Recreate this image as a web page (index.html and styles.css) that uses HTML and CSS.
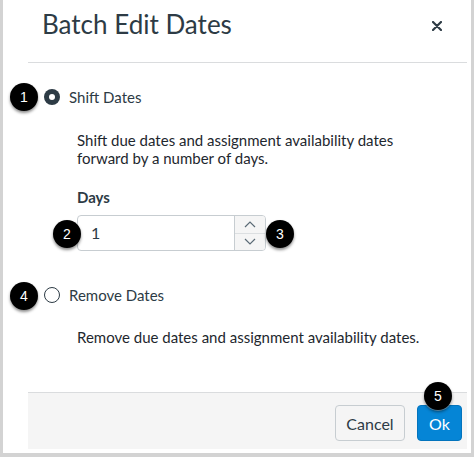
FILE: index.html
```html
<!DOCTYPE html>
<html>
<head>
<meta charset="utf-8">
<link rel="stylesheet" href="styles.css">
</head>
<body>
<div class="dialog">
  <div class="header">
    <h1 class="title">Batch Edit Dates</h1>
    <svg class="close" width="10" height="10" viewBox="0 0 10 10"><path d="M1 1 L9 9 M9 1 L1 9" stroke="#2d3b45" stroke-width="2.2" stroke-linecap="round"/></svg>
  </div>
  <div class="body">
    <div class="radio-row first">
      <span class="radio checked"></span>
      <span class="radio-label">Shift Dates</span>
    </div>
    <p class="desc shift-desc">Shift due dates and assignment availability dates<br>forward by a number of days.</p>
    <div class="field-label">Days</div>
    <div class="number-input">
      <span class="value">1</span>
      <div class="spinner">
        <div class="spin up"><svg width="12" height="7" viewBox="0 0 12 7"><path d="M1 6 L6 1 L11 6" fill="none" stroke="#5b6b76" stroke-width="1.2"/></svg></div>
        <div class="spin down"><svg width="12" height="7" viewBox="0 0 12 7"><path d="M1 1 L6 6 L11 1" fill="none" stroke="#5b6b76" stroke-width="1.2"/></svg></div>
      </div>
    </div>
    <div class="radio-row second">
      <span class="radio"></span>
      <span class="radio-label">Remove Dates</span>
    </div>
    <p class="desc remove-desc">Remove due dates and assignment availability dates.</p>
  </div>
  <div class="footer">
    <button class="btn cancel">Cancel</button>
    <button class="btn ok">Ok</button>
  </div>
</div>
<span class="badge b1">1</span>
<span class="badge b2">2</span>
<span class="badge b3">3</span>
<span class="badge b4">4</span>
<span class="badge b5">5</span>
</body>
</html>
```
FILE: styles.css
```css
html, body {
  margin: 0;
  padding: 0;
}
body {
  background: #d3d3d3;
  width: 474px;
  height: 457px;
  position: relative;
  overflow: hidden;
  font-family: Lato, "Open Sans", sans-serif;
  color: #2d3b45;
}
.dialog {
  margin-left: 3px;
  width: 468px;
  height: 453px;
  background: #fff;
  padding: 0 4px 4px 25px;
  box-sizing: border-box;
  display: flex;
  flex-direction: column;
}
.header {
  display: flex;
  justify-content: space-between;
  align-items: flex-start;
  height: 63px;
  box-sizing: border-box;
  padding: 8px 25px 0 14px;
  border-bottom: 1px solid #dadcde;
}
.title {
  margin: 0;
  font-size: 26px;
  line-height: 32px;
  font-weight: 400;
  color: #2d3b45;
}
.close {
  margin-top: 13px;
}
.body {
  display: flex;
  flex-direction: column;
  align-items: flex-start;
}
.radio-row {
  display: flex;
  align-items: center;
  height: 20px;
  padding-left: 16px;
}
.radio-row.first { margin-top: 24px; }
.radio-row.second { margin-top: 34px; }
.radio {
  width: 16px;
  height: 16px;
  border-radius: 50%;
  box-sizing: border-box;
  border: 1.5px solid #2d3b45;
  display: flex;
  align-items: center;
  justify-content: center;
}
.radio.checked {
  background: #2d3b45;
  border: none;
}
.radio.checked::after {
  content: "";
  width: 6px;
  height: 6px;
  border-radius: 50%;
  background: #fff;
}
.radio-label {
  margin-left: 9px;
  font-size: 15px;
  line-height: 20px;
}
.desc {
  margin: 0;
  padding-left: 49px;
  font-size: 15px;
  line-height: 18px;
  color: #1e272e;
}
.shift-desc { margin-top: 24px; }
.remove-desc { margin-top: 23px; }
.field-label {
  margin-top: 20px;
  padding-left: 49px;
  font-size: 15px;
  line-height: 20px;
  font-weight: 700;
}
.number-input {
  margin-top: 8px;
  margin-left: 49px;
  width: 189px;
  height: 36px;
  box-sizing: border-box;
  border: 1px solid #c7cdd1;
  border-radius: 4px;
  display: flex;
  align-items: stretch;
}
.value {
  flex: 1;
  padding-left: 13px;
  font-size: 16px;
  line-height: 34px;
}
.spinner {
  width: 30px;
  border-left: 1px solid #c7cdd1;
  background: #f5f5f5;
  border-radius: 0 3px 3px 0;
  display: flex;
  flex-direction: column;
}
.spin {
  flex: 1;
  display: flex;
  align-items: center;
  justify-content: center;
}
.spin.up { border-bottom: 1px solid #dcdfe1; }
.footer {
  margin-top: auto;
  height: 57px;
  box-sizing: border-box;
  background: #f5f5f5;
  border-top: 1px solid #dadcde;
  display: flex;
  justify-content: flex-end;
  align-items: flex-start;
  gap: 12px;
  padding: 12px 5px 0 0;
}
.btn {
  height: 36px;
  border-radius: 4px;
  font-family: Lato, "Open Sans", sans-serif;
  font-size: 16px;
  padding: 0;
  box-sizing: border-box;
}
.cancel {
  width: 70px;
  background: #f5f5f5;
  border: 1px solid #c7cdd1;
  color: #2d3b45;
}
.ok {
  width: 45px;
  background: #0585d6;
  border: 1px solid #0374bd;
  color: #fff;
}
.badge {
  position: absolute;
  width: 28px;
  height: 28px;
  margin: -14px 0 0 -14px;
  border-radius: 50%;
  background: #000;
  color: #fff;
  font-family: "Liberation Sans", Arial, sans-serif;
  font-size: 14px;
  line-height: 28px;
  text-align: center;
  box-shadow: 0 2px 3px rgba(0,0,0,0.45), 0 0 0 1px rgba(255,255,255,0.5);
}
.b1 { left: 24px; top: 97px; }
.b2 { left: 67px; top: 234px; }
.b3 { left: 280px; top: 234px; }
.b4 { left: 24px; top: 296px; }
.b5 { left: 438px; top: 396px; }
```
